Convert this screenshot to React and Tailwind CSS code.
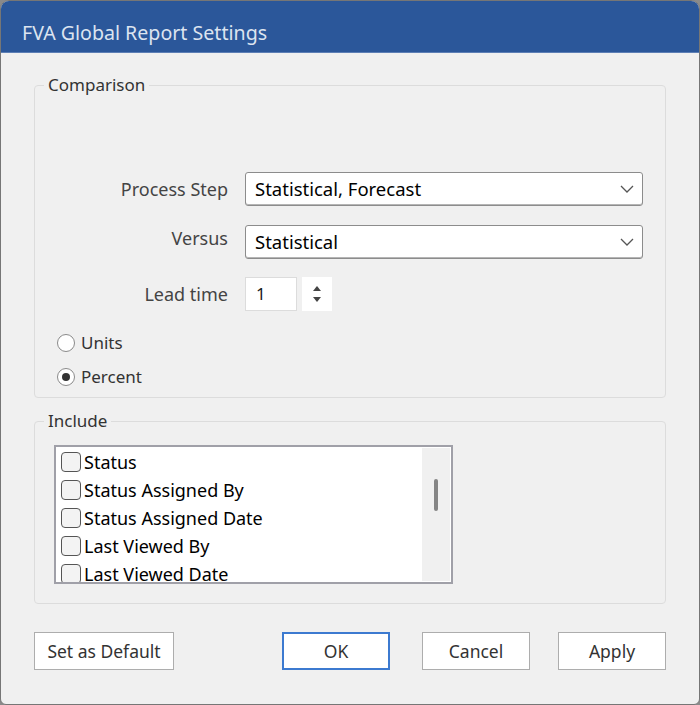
import React, { useState } from 'react';

const font = { fontFamily: '"Noto Sans", "Open Sans", sans-serif' };

function Chevron() {
    return (
        <svg width="16" height="10" viewBox="0 0 16 10" className="text-[#555]">
            <path d="M2 2 L8 8 L14 2" fill="none" stroke="currentColor" strokeWidth="1.3" />
        </svg>
    );
}

function Dropdown({ value }) {
    return (
        <div className="w-[398px] h-[34px] bg-white border border-[#8c8c8c] rounded-[3px] flex items-center justify-between pl-[9px] pr-[7px] shadow-[inset_0_-1px_0_#b5b5b5]">
            <span className="text-[18.5px] text-black">{value}</span>
            <Chevron />
        </div>
    );
}

function Radio({ checked, label }) {
    return (
        <div className="flex items-center h-[22px] gap-[6px]">
            <div className="w-[18px] h-[18px] rounded-full border border-[#8a8a8a] bg-white flex items-center justify-center">
                {checked && <div className="w-[8px] h-[8px] rounded-full bg-[#333]" />}
            </div>
            <span className="text-[17px] text-[#333]">{label}</span>
        </div>
    );
}

function Button({ children, primary, width }) {
    return (
        <button
            className={
                'h-[38px] bg-white text-[17.5px] text-[#333] ' +
                (primary ? 'border-2 border-[#3c7ad0]' : 'border border-[#adadad]')
            }
            style={{ width }}
        >
            {children}
        </button>
    );
}

const items = ['Status', 'Status Assigned By', 'Status Assigned Date', 'Last Viewed By', 'Last Viewed Date'];

export default function App() {
    const [mode] = useState('percent');

    return (
        <div className="w-[700px] h-[705px] bg-[#8a8a8a]" style={font}>
            <div className="w-full h-full rounded-t-[9px] rounded-b-[6px] border border-[#767676] overflow-hidden bg-[#f0f0f0] flex flex-col">
                <div className="h-[52px] bg-[#2b579a] flex items-center pl-[21px] pt-[12px] border-b border-[#5d7fb5]">
                    <span className="text-[19.6px] text-[#dce4f0]">FVA Global Report Settings</span>
                </div>

                <div className="flex flex-col px-[33px] pt-[21px]">
                    <fieldset className="border border-[#dcdcdc] rounded-[4px] h-[324px] px-0">
                        <legend className="ml-[9px] px-[4px] text-[17px] text-[#333] leading-[22px]">Comparison</legend>

                        <div className="flex flex-col mt-[76px]">
                            <div className="flex items-center h-[34px]">
                                <div className="w-[193px] pr-0 text-right text-[18px] text-[#444]">Process Step</div>
                                <div className="ml-[17px]"><Dropdown value="Statistical, Forecast" /></div>
                            </div>
                            <div className="flex items-center h-[34px] mt-[19px]">
                                <div className="w-[193px] text-right text-[18px] text-[#444] -mt-[7px]">Versus</div>
                                <div className="ml-[17px]"><Dropdown value="Statistical" /></div>
                            </div>
                            <div className="flex items-center h-[34px] mt-[18px]">
                                <div className="w-[193px] text-right text-[18px] text-[#444]">Lead time</div>
                                <div className="ml-[17px] flex items-center">
                                    <div className="w-[52px] h-[34px] bg-white border border-[#dcdcdc] flex items-center pl-[10px] text-[17px] text-[#1a1a1a]">1</div>
                                    <div className="w-[30px] h-[34px] bg-white ml-[5px] flex flex-col items-center justify-center gap-[6px]">
                                        <svg width="8" height="5" viewBox="0 0 8 5"><path d="M0 5 L4 0 L8 5 Z" fill="#444" /></svg>
                                        <svg width="8" height="5" viewBox="0 0 8 5"><path d="M0 0 L4 5 L8 0 Z" fill="#444" /></svg>
                                    </div>
                                </div>
                            </div>
                        </div>

                        <div className="flex flex-col gap-[12px] mt-[21px] ml-[22px]">
                            <Radio label="Units" checked={mode === 'units'} />
                            <Radio label="Percent" checked={mode === 'percent'} />
                        </div>
                    </fieldset>

                    <fieldset className="border border-[#dcdcdc] rounded-[4px] h-[194px] mt-[12px] px-0">
                        <legend className="ml-[9px] px-[4px] text-[17px] text-[#333] leading-[22px]">Include</legend>
                        <div className="ml-[19px] mt-[13px] w-[399px] h-[139px] bg-white border-2 border-[#a0a0a8] flex overflow-hidden">
                            <div className="flex-1 flex flex-col pl-[5px] pt-[1px]">
                                {items.map((it) => (
                                    <div key={it} className="flex items-center h-[28px] shrink-0 gap-[3px]">
                                        <div className="w-[20px] h-[20px] rounded-[4px] border border-[#555] bg-[#f3f3f3]" />
                                        <span className="text-[18px] text-black">{it}</span>
                                    </div>
                                ))}
                            </div>
                            <div className="w-[28px] bg-[#f0f0f0] my-[1px] mr-[1px] flex justify-center">
                                <div className="w-[4px] h-[32px] mt-[31px] rounded-full bg-[#858585]" />
                            </div>
                        </div>
                    </fieldset>
                </div>

                <div className="flex items-center px-[33px] mt-[28px]">
                    <Button width="140px">Set as Default</Button>
                    <div className="ml-[108px]"><Button primary width="108px">OK</Button></div>
                    <div className="ml-[32px]"><Button width="108px">Cancel</Button></div>
                    <div className="ml-[28px]"><Button width="108px">Apply</Button></div>
                </div>
            </div>
        </div>
    );
}
